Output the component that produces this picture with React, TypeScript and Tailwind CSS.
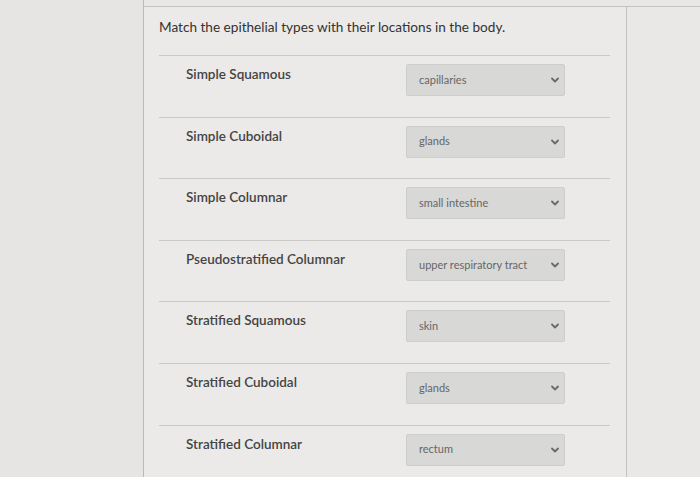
const rows = [
  { label: "Simple Squamous", value: "capillaries" },
  { label: "Simple Cuboidal", value: "glands" },
  { label: "Simple Columnar", value: "small intestine" },
  { label: "Pseudostratified Columnar", value: "upper respiratory tract" },
  { label: "Stratified Squamous", value: "skin" },
  { label: "Stratified Cuboidal", value: "glands" },
  { label: "Stratified Columnar", value: "rectum" },
];

function Chevron() {
  return (
    <svg width="8" height="6" viewBox="0 0 8 6" fill="none">
      <path d="M1 1.5l3 3 3-3" stroke="#6a6a6a" strokeWidth="1.8" strokeLinecap="round" strokeLinejoin="round" />
    </svg>
  );
}

export default function App() {
  return (
    <div
      className="flex h-[477px] w-[700px] overflow-hidden bg-[#e8e7e5] text-[#3c3c3c]"
      style={{ fontFamily: "Lato, 'Open Sans', sans-serif" }}
    >
      <div className="w-[144px] shrink-0 border-r border-[#b9b9b7] bg-[#e6e5e3]" />
      <div className="mt-[6px] flex w-[483px] shrink-0 flex-col border-r border-t border-[#c2c2c0] bg-[#ebeae8] pl-[15px] pr-[16px]">
        <div className="h-[48px] shrink-0 pt-[10px] text-[13.6px] text-[#333]">
          Match the epithelial types with their locations in the body.
        </div>
        {rows.map((r) => (
          <div key={r.label} className="flex h-[61.6px] shrink-0 border-t border-[#c9c9c7]">
            <div className="w-[247px] pl-[27px] pt-[8px] text-[13.5px] font-semibold text-[#444]">
              {r.label}
            </div>
            <div className="pt-[8px]">
              <div className="flex h-[32px] w-[159px] items-center justify-between rounded-[2px] border border-[#cdcdcb] bg-[#d8d8d6] pl-[12px] pr-[5px] text-[11px] text-[#666]">
                <span>{r.value}</span>
                <Chevron />
              </div>
            </div>
          </div>
        ))}
      </div>
      <div className="mt-[6px] flex-1 border-t border-[#c2c2c0] bg-[#e9e8e6]" />
    </div>
  );
}
